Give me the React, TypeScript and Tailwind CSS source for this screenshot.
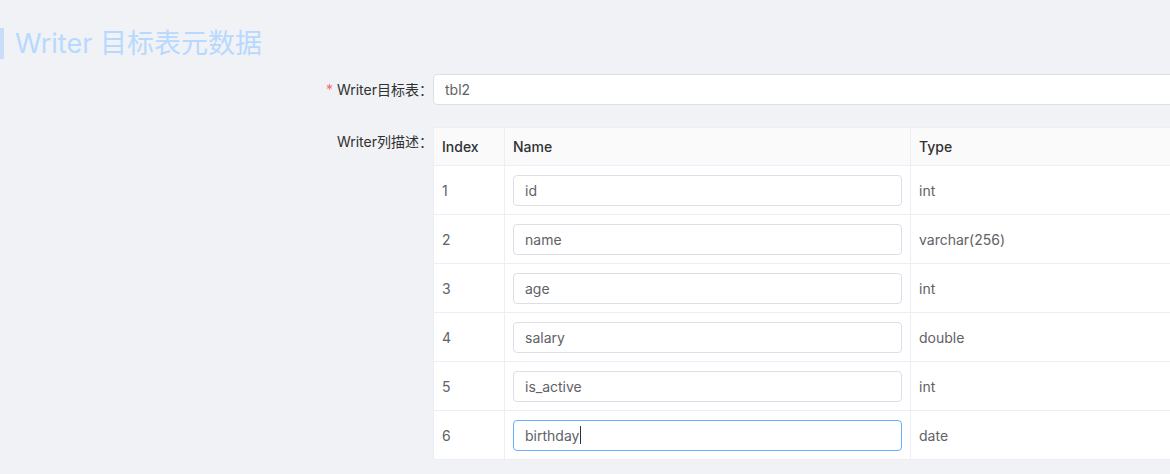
import React from "react";

type Column = { index: number; name: string; type: string };

const COLUMNS: Column[] = [
  { index: 1, name: "id", type: "int" },
  { index: 2, name: "name", type: "varchar(256)" },
  { index: 3, name: "age", type: "int" },
  { index: 4, name: "salary", type: "double" },
  { index: 5, name: "is_active", type: "int" },
  { index: 6, name: "birthday", type: "date" },
];

const FONT = "font-['Inter','Noto_Sans_CJK_SC',sans-serif]";

export default function App() {
  return (
    <div className={`${FONT} h-[474px] w-[1170px] overflow-hidden bg-[#f0f2f5] pt-[28px]`}>
      <h2 className="flex h-[31px] items-center border-l-4 border-[#c9dcf8] pl-[11px] text-[27px] font-normal leading-[31px] text-[#b8d9ff]">
        Writer 目标表元数据
      </h2>

      <div className="mt-[15px] flex items-center">
        <label className="w-[433px] shrink-0 text-right text-[14px] text-[#303133]">
          <span className="mr-[4px] text-[#f56c6c]">*</span>
          Writer目标表：
        </label>
        <input
          readOnly
          value="tbl2"
          className="h-[31px] w-[900px] shrink-0 rounded-[4px] border border-[#dcdfe6] bg-white px-[11px] text-[14px] text-[#606266] outline-none"
        />
      </div>

      <div className="mt-[22px] flex items-start">
        <label className="h-[30px] w-[433px] shrink-0 text-right text-[14px] leading-[30px] text-[#303133]">
          Writer列描述：
        </label>
        <table className="w-[900px] shrink-0 border-collapse border border-[#ebeef5] bg-white text-[14px]">
          <thead>
            <tr className="h-[38px] bg-[#fafafa] text-left text-[#303133]">
              <th className="w-[71px] border border-[#ebeef5] px-[8px] font-medium">Index</th>
              <th className="w-[406px] border border-[#ebeef5] px-[8px] font-medium">Name</th>
              <th className="border border-[#ebeef5] px-[8px] font-medium">Type</th>
            </tr>
          </thead>
          <tbody className="text-[#606266]">
            {COLUMNS.map((col, i) => {
              const last = i === COLUMNS.length - 1;
              return (
                <tr key={col.index} className="h-[49px]">
                  <td className="border border-[#ebeef5] px-[8px]">{col.index}</td>
                  <td className="border border-[#ebeef5] px-[8px]">
                    {last ? (
                      <div className="flex h-[31px] w-full items-center rounded-[4px] border border-[#66b1ff] bg-white px-[11px] text-[#606266]">
                        {col.name}
                        <span className="ml-px h-[18px] w-px bg-[#303133]" />
                      </div>
                    ) : (
                      <input
                        readOnly
                        value={col.name}
                        className="h-[31px] w-full rounded-[4px] border border-[#dcdfe6] bg-white px-[11px] text-[#606266] outline-none"
                      />
                    )}
                  </td>
                  <td className="border border-[#ebeef5] px-[8px]">{col.type}</td>
                </tr>
              );
            })}
          </tbody>
        </table>
      </div>
    </div>
  );
}
